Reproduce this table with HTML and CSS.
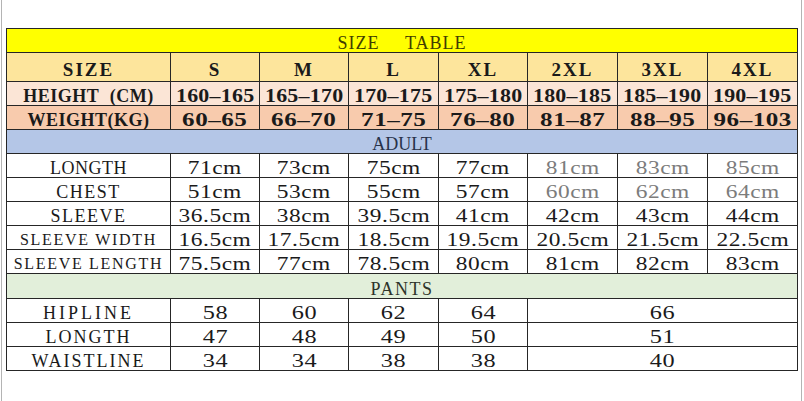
FILE: index.html
```html
<!DOCTYPE html>
<html>
<head>
<meta charset="utf-8">
<link rel="stylesheet" href="styles.css">
</head>
<body>
<div class="frame">
<table class="size-table">
  <colgroup>
    <col class="c-label"><col class="c-s"><col class="c-m"><col class="c-l"><col class="c-xl"><col class="c-2xl"><col class="c-3xl"><col class="c-4xl">
  </colgroup>
  <tr class="r-title"><td colspan="8"><span class="title-a">SIZE</span> <span class="title-b">TABLE</span></td></tr>
  <tr class="r-size">
    <td>SIZE</td><td>S</td><td>M</td><td>L</td><td>XL</td><td>2XL</td><td>3XL</td><td>4XL</td>
  </tr>
  <tr class="r-height">
    <td class="lab">HEIGHT (CM)</td><td><span class="n">160–165</span></td><td><span class="n">165–170</span></td><td><span class="n">170–175</span></td><td><span class="n">175–180</span></td><td><span class="n">180–185</span></td><td><span class="n">185–190</span></td><td><span class="n">190–195</span></td>
  </tr>
  <tr class="r-weight">
    <td class="lab">WEIGHT(KG)</td><td><span class="n">60–65</span></td><td><span class="n">66–70</span></td><td><span class="n">71–75</span></td><td><span class="n">76–80</span></td><td><span class="n">81–87</span></td><td><span class="n">88–95</span></td><td><span class="n">96–103</span></td>
  </tr>
  <tr class="r-adult"><td colspan="8">ADULT</td></tr>
  <tr class="r-data">
    <td class="lab lab-tight">LONGTH</td><td><span class="n">71cm</span></td><td><span class="n">73cm</span></td><td><span class="n">75cm</span></td><td><span class="n">77cm</span></td><td class="muted"><span class="n">81cm</span></td><td class="muted"><span class="n">83cm</span></td><td class="muted"><span class="n">85cm</span></td>
  </tr>
  <tr class="r-data">
    <td class="lab">CHEST</td><td><span class="n">51cm</span></td><td><span class="n">53cm</span></td><td><span class="n">55cm</span></td><td><span class="n">57cm</span></td><td class="muted"><span class="n">60cm</span></td><td class="muted"><span class="n">62cm</span></td><td class="muted"><span class="n">64cm</span></td>
  </tr>
  <tr class="r-data">
    <td class="lab">SLEEVE</td><td><span class="n">36.5cm</span></td><td><span class="n">38cm</span></td><td><span class="n">39.5cm</span></td><td><span class="n">41cm</span></td><td><span class="n">42cm</span></td><td><span class="n">43cm</span></td><td><span class="n">44cm</span></td>
  </tr>
  <tr class="r-data">
    <td class="lab lab-small">SLEEVE WIDTH</td><td><span class="n">16.5cm</span></td><td><span class="n">17.5cm</span></td><td><span class="n">18.5cm</span></td><td><span class="n">19.5cm</span></td><td><span class="n">20.5cm</span></td><td><span class="n">21.5cm</span></td><td><span class="n">22.5cm</span></td>
  </tr>
  <tr class="r-data">
    <td class="lab lab-small">SLEEVE LENGTH</td><td><span class="n">75.5cm</span></td><td><span class="n">77cm</span></td><td><span class="n">78.5cm</span></td><td><span class="n">80cm</span></td><td><span class="n">81cm</span></td><td><span class="n">82cm</span></td><td><span class="n">83cm</span></td>
  </tr>
  <tr class="r-pants"><td colspan="8">PANTS</td></tr>
  <tr class="r-pdata">
    <td class="lab lab-wide">HIPLINE</td><td><span class="n">58</span></td><td><span class="n">60</span></td><td><span class="n">62</span></td><td><span class="n">64</span></td><td colspan="3"><span class="n">66</span></td>
  </tr>
  <tr class="r-pdata">
    <td class="lab lab-tight">LONGTH</td><td><span class="n">47</span></td><td><span class="n">48</span></td><td><span class="n">49</span></td><td><span class="n">50</span></td><td colspan="3"><span class="n">51</span></td>
  </tr>
  <tr class="r-pdata">
    <td class="lab">WAISTLINE</td><td><span class="n">34</span></td><td><span class="n">34</span></td><td><span class="n">38</span></td><td><span class="n">38</span></td><td colspan="3"><span class="n">40</span></td>
  </tr>
</table>
</div>
</body>
</html>
```

FILE: styles.css
```css
html, body {
  margin: 0;
  padding: 0;
  background: #ffffff;
}

.frame {
  box-sizing: border-box;
  width: 801px;
  height: 401px;
  margin-left: 1px;
  border-left: 1px solid #b4b4b4;
  border-right: 1px solid #b4b4b4;
  padding: 28px 0 0 4px;
  background: #ffffff;
}

.size-table {
  border-collapse: collapse;
  table-layout: fixed;
  width: 791px;
  font-family: "Liberation Serif", "Times New Roman", serif;
  font-size: 18px;
  color: #1a1a1a;
}

.c-label { width: 164px; }
.c-s { width: 89px; }
.c-m { width: 89px; }
.c-l { width: 90px; }
.c-xl { width: 89px; }
.c-2xl { width: 90px; }
.c-3xl { width: 90px; }
.c-4xl { width: 90px; }

.size-table td {
  border: 1px solid #262626;
  padding: 0;
  text-align: center;
  vertical-align: bottom;
  line-height: 18px;
  white-space: nowrap;
  overflow: visible;
}

/* numbers: wide, stretched glyphs as in the original sheet */
.n {
  display: inline-block;
  transform: scaleX(1.3);
  transform-origin: 50% 50%;
  letter-spacing: 0.4px;
}

.r-title td {
  height: 23px;
  background: #ffff00;
  color: #423e00;
  letter-spacing: 1px;
}
.title-b { margin-left: 20px; }

.r-size td {
  height: 26px;
  background: #fde59c;
  font-weight: bold;
  font-size: 19px;
  letter-spacing: 2px;
  padding-bottom: 2px;
}

.r-height td {
  height: 23px;
  background: #fbe5d6;
  font-weight: bold;
}
.r-height .n { transform: scaleX(1.22); letter-spacing: 0.2px; }
.r-height td.lab { letter-spacing: 0.5px; word-spacing: 6px; }

.r-weight td {
  height: 23px;
  background: #f8cbad;
  font-weight: bold;
  font-size: 19px;
}
.r-weight .n { transform: scaleX(1.32); letter-spacing: 0.4px; }
.r-weight td.lab { font-size: 18px; letter-spacing: 0.5px; }

.r-adult td {
  height: 23px;
  background: #b4c6e7;
  color: #28324a;
}

.r-data td {
  height: 23px;
  background: #ffffff;
}

.r-data td.lab { letter-spacing: 1.5px; }
.r-data td.lab-tight,
.r-pdata td.lab-tight { letter-spacing: 0.5px; }
.r-data td.lab-small { font-size: 16px; letter-spacing: 1.7px; }

.r-data td.muted { color: #7c7c7c; }

.r-pants td {
  height: 24px;
  background: #e2efda;
  color: #2e342a;
  letter-spacing: 1.5px;
}

.r-pdata td {
  height: 23px;
  background: #ffffff;
}
.r-pdata .n { transform: scaleX(1.35); }
.r-pdata td.lab { letter-spacing: 2px; }
.r-pdata td.lab-wide { letter-spacing: 3px; }
```
